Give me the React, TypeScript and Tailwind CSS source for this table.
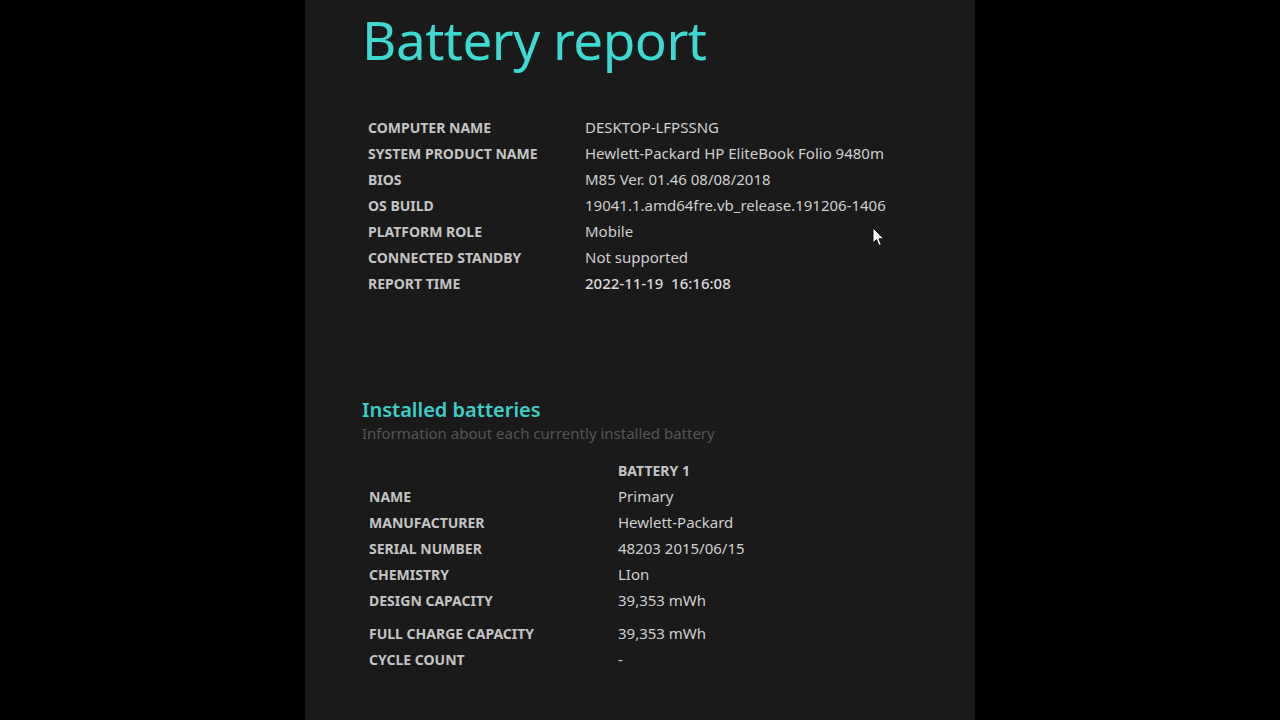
import React from 'react';

const system = [
  ['COMPUTER NAME', 'DESKTOP-LFPSSNG'],
  ['SYSTEM PRODUCT NAME', 'Hewlett-Packard HP EliteBook Folio 9480m'],
  ['BIOS', 'M85 Ver. 01.46 08/08/2018'],
  ['OS BUILD', '19041.1.amd64fre.vb_release.191206-1406'],
  ['PLATFORM ROLE', 'Mobile'],
  ['CONNECTED STANDBY', 'Not supported'],
];

const battery = [
  ['NAME', 'Primary'],
  ['MANUFACTURER', 'Hewlett-Packard'],
  ['SERIAL NUMBER', '48203 2015/06/15'],
  ['CHEMISTRY', 'LIon'],
  ['DESIGN CAPACITY', '39,353 mWh'],
];

function Cursor() {
  return (
    <svg className="absolute left-[567px] top-[227px]" width="14" height="21" viewBox="0 0 14 21">
      <path d="M1 1 L1 16 L4.5 12.5 L7 18.5 L9.3 17.5 L6.9 11.8 L11.8 11.8 Z" fill="#ffffff" stroke="#111" strokeWidth="1" />
    </svg>
  );
}

export default function App() {
  return (
    <div className="w-[1280px] h-[720px] bg-black flex justify-center overflow-hidden" style={{ fontFamily: '"Noto Sans", "Open Sans", sans-serif' }}>
      <div className="relative w-[670px] h-[720px] bg-[#1a1a1a] pl-[57px]">
        <h1 className="text-[53px] leading-none text-[#3dd9d2] pt-[13px] tracking-[-0.5px]">Battery report</h1>

        <div className="mt-[48px] pl-[6px] text-[15px] leading-[26px]">
          {system.map(([k, v]) => (
            <div key={k} className="flex items-baseline h-[26px]">
              <div className="w-[217px] font-bold text-[14px] text-[#c4c4c4]">{k}</div>
              <div className="text-[#cfcfcf]">{v}</div>
            </div>
          ))}
          <div className="flex items-baseline h-[26px]">
            <div className="w-[217px] font-bold text-[14px] text-[#c4c4c4]">REPORT TIME</div>
            <div className="text-[#dadada] font-medium whitespace-pre">2022-11-19  16:16:08</div>
          </div>
        </div>

        <h2 className="mt-[101px] text-[20px] font-semibold leading-[26px] text-[#3ccfc6]">Installed batteries</h2>
        <p className="text-[15px] leading-[20px] text-[#555555]">Information about each currently installed battery</p>

        <div className="mt-[15px] pl-[7px] text-[15px] leading-[26px]">
          <div className="flex items-baseline h-[25px]">
            <div className="w-[249px]" />
            <div className="font-bold text-[14px] text-[#c4c4c4]">BATTERY 1</div>
          </div>
          {battery.map(([k, v]) => (
            <div key={k} className="flex items-baseline h-[26px]">
              <div className="w-[249px] font-bold text-[14px] text-[#c4c4c4]">{k}</div>
              <div className="text-[#cfcfcf]">{v}</div>
            </div>
          ))}
          <div className="flex items-baseline h-[26px] mt-[7px]">
            <div className="w-[249px] font-bold text-[14px] text-[#c4c4c4]">FULL CHARGE CAPACITY</div>
            <div className="text-[#cfcfcf]">39,353 mWh</div>
          </div>
          <div className="flex items-baseline h-[26px]">
            <div className="w-[249px] font-bold text-[14px] text-[#c4c4c4]">CYCLE COUNT</div>
            <div className="text-[#cfcfcf]">-</div>
          </div>
        </div>

        <Cursor />
      </div>
    </div>
  );
}
